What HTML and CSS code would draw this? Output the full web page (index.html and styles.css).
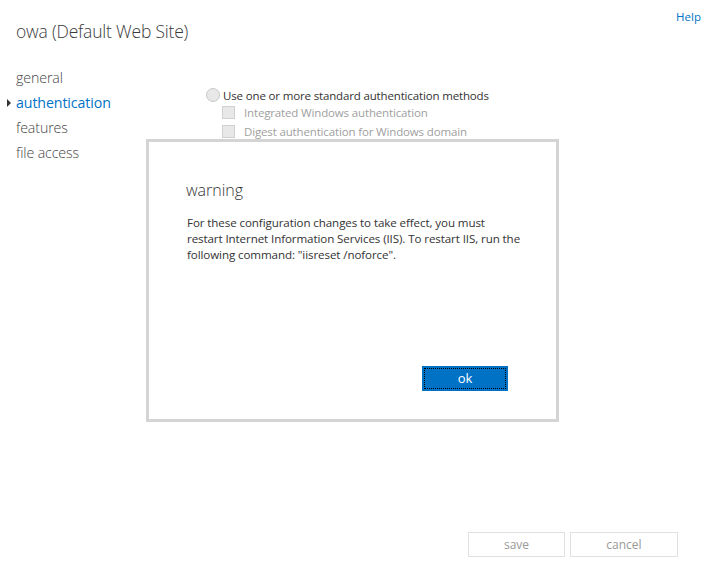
FILE: index.html
```html
<!DOCTYPE html>
<html>
<head>
<meta charset="utf-8">
<link rel="stylesheet" href="styles.css">
</head>
<body>
<div class="page">
  <header class="header">
    <h1 class="title">owa (Default Web Site)</h1>
    <a class="help">Help</a>
  </header>
  <div class="main">
    <nav class="nav">
      <div class="nav-item">general</div>
      <div class="nav-item active"><span class="arrow"></span>authentication</div>
      <div class="nav-item">features</div>
      <div class="nav-item">file access</div>
    </nav>
    <section class="content">
      <div class="radio-row"><span class="radio"></span><span class="radio-label">Use one or more standard authentication methods</span></div>
      <div class="check-row"><span class="check"></span><span class="check-label">Integrated Windows authentication</span></div>
      <div class="check-row"><span class="check"></span><span class="check-label">Digest authentication for Windows domain</span></div>
    </section>
  </div>
  <footer class="footer">
    <button class="btn save">save</button>
    <button class="btn cancel">cancel</button>
  </footer>
  <div class="dialog">
    <h2 class="dialog-title">warning</h2>
    <p class="dialog-text">For these configuration changes to take effect, you must<br>restart Internet Information Services (IIS). To restart IIS, run the following command: "iisreset /noforce".</p>
    <div class="dialog-actions"><button class="ok"><span class="ok-inner">ok</span></button></div>
  </div>
</div>
</body>
</html>
```
FILE: styles.css
```css
html, body {
  margin: 0;
  padding: 0;
  background: #fff;
}
body {
  font-family: "Open Sans", "Noto Sans", sans-serif;
  color: #333;
}
.page {
  position: relative;
  width: 707px;
  height: 562px;
  display: flex;
  flex-direction: column;
  overflow: hidden;
}
.header {
  display: flex;
  justify-content: space-between;
  align-items: flex-start;
  padding: 0 6px 0 16px;
}
.title {
  margin: 19px 0 0 0;
  font-size: 17.5px;
  font-weight: 300;
  color: #3a3a3a;
  line-height: 24px;
  letter-spacing: -0.2px;
}
.help {
  margin-top: 9px;
  font-size: 11.5px;
  color: #0072c6;
  line-height: 16px;
}
.main {
  display: flex;
  margin-top: 22px;
  flex: 1;
}
.nav {
  width: 190px;
  padding-left: 16px;
  display: flex;
  flex-direction: column;
}
.nav-item {
  position: relative;
  font-size: 14.2px;
  font-weight: 300;
  line-height: 25px;
  color: #444;
  letter-spacing: -0.1px;
}
.nav-item.active {
  color: #0072c6;
  font-weight: 400;
}
.arrow {
  position: absolute;
  left: -9px;
  top: 9px;
  width: 0;
  height: 0;
  border-top: 4px solid transparent;
  border-bottom: 4px solid transparent;
  border-left: 4px solid #333;
}
.content {
  padding-top: 22px;
  display: flex;
  flex-direction: column;
}
.radio-row {
  display: flex;
  align-items: center;
  height: 16px;
  margin-left: 0;
}
.radio {
  width: 12px;
  height: 12px;
  border: 1px solid #c8c8c8;
  border-radius: 50%;
  background: #e8e8e8;
  margin-right: 3px;
}
.radio-label {
  font-size: 11.5px;
  color: #333;
  letter-spacing: -0.15px;
}
.check-row {
  display: flex;
  align-items: center;
  height: 19px;
  margin-left: 16px;
}
.check {
  width: 11px;
  height: 11px;
  border: 1px solid #d0d0d0;
  background: #e8e8e8;
  margin-right: 9px;
}
.check-label {
  font-size: 11.5px;
  color: #a0a0a0;
  letter-spacing: -0.15px;
}
.footer {
  display: flex;
  justify-content: flex-end;
  gap: 5px;
  padding: 0 29px 5px 0;
}
.btn {
  font-family: "Open Sans", "Noto Sans", sans-serif;
  font-size: 12px;
  color: #999;
  background: #fff;
  border: 1px solid #e0e0e0;
  height: 25px;
  padding: 0;
}
.save { width: 97px; }
.cancel { width: 108px; }
.dialog {
  position: absolute;
  left: 146px;
  top: 139px;
  width: 407px;
  height: 277px;
  border: 3px solid #d4d4d4;
  background: #fff;
  box-sizing: content-box;
  display: flex;
  flex-direction: column;
}
.dialog-title {
  margin: 37px 0 0 37px;
  font-size: 16px;
  font-weight: 300;
  color: #333;
  line-height: 22px;
}
.dialog-text {
  margin: 14px 0 0 38px;
  width: 345px;
  font-size: 11.6px;
  line-height: 16px;
  color: #333;
  letter-spacing: -0.1px;
}
.dialog-actions {
  display: flex;
  justify-content: flex-end;
  margin-top: auto;
  padding: 0 48px 28px 0;
}
.ok {
  width: 86px;
  height: 25px;
  background: #0072c6;
  border: 1px solid #0072c6;
  padding: 1px;
  display: flex;
}
.ok-inner {
  flex: 1;
  border: 1px dotted #fff;
  outline: 1px dotted #000;
  outline-offset: -1px;
  color: #fff;
  font-family: "Open Sans", "Noto Sans", sans-serif;
  font-size: 13px;
  line-height: 19px;
  display: flex;
  align-items: center;
  justify-content: center;
}
```
